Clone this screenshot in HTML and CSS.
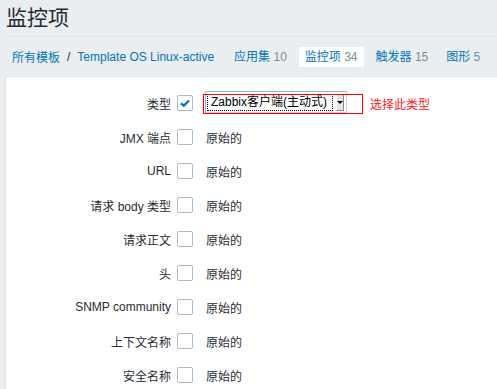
FILE: index.html
```html
<!DOCTYPE html>
<html lang="zh">
<head>
<meta charset="utf-8">
<title>监控项</title>
<link rel="stylesheet" href="styles.css">
</head>
<body>
<header class="page-header">
  <h1 class="title">监控项</h1>
</header>
<nav class="crumbs">
  <a class="link">所有模板</a>
  <span class="sep">/</span>
  <a class="link">Template OS Linux-active</a>
  <ul class="tabs">
    <li class="tab"><a class="link">应用集</a> <span class="count">10</span></li>
    <li class="tab active"><a class="link">监控项</a> <span class="count">34</span></li>
    <li class="tab"><a class="link">触发器</a> <span class="count">15</span></li>
    <li class="tab"><a class="link">图形</a> <span class="count">5</span></li>
    <li class="tab"><a class="link">发现规则</a> <span class="count">3</span></li>
  </ul>
</nav>
<main class="panel">
  <div class="form">
    <div class="label">类型</div>
    <span class="cb checked"><svg viewBox="0 0 16 16" width="16" height="16"><path d="M4 8.3 L6.8 10.7 L12 5.4" fill="none" stroke="#0275b8" stroke-width="2.2"/></svg></span>
    <div class="value">
      <div class="select-wrap">
        <div class="select">
          <span class="select-text">Zabbix客户端(主动式)</span>
          <span class="select-btn"><span class="arrow"></span></span>
        </div>
        <span class="mark"></span>
      </div>
      <span class="note">选择此类型</span>
    </div>

    <div class="label">JMX 端点</div><span class="cb"></span><div class="value"><span class="orig">原始的</span></div>
    <div class="label">URL</div><span class="cb"></span><div class="value"><span class="orig">原始的</span></div>
    <div class="label">请求 body 类型</div><span class="cb"></span><div class="value"><span class="orig">原始的</span></div>
    <div class="label">请求正文</div><span class="cb"></span><div class="value"><span class="orig">原始的</span></div>
    <div class="label">头</div><span class="cb"></span><div class="value"><span class="orig">原始的</span></div>
    <div class="label">SNMP community</div><span class="cb"></span><div class="value"><span class="orig">原始的</span></div>
    <div class="label">上下文名称</div><span class="cb"></span><div class="value"><span class="orig">原始的</span></div>
    <div class="label">安全名称</div><span class="cb"></span><div class="value"><span class="orig">原始的</span></div>
  </div>
</main>
</body>
</html>
```

FILE: styles.css
```css
* { box-sizing: border-box; }
html, body { margin: 0; padding: 0; }
body {
  background: #ebeef1;
  font-family: "Liberation Sans", Arial, "Noto Sans CJK SC", sans-serif;
  font-size: 12px;
  color: #1f2c33;
  width: 497px;
  height: 389px;
  overflow: hidden;
  display: flex;
  flex-direction: column;
}
.page-header {
  margin-left: 5px;
  height: 37px;
  flex: 0 0 37px;
  border-bottom: 1px solid #dfe4e7;
  display: flex;
  align-items: center;
}
.title {
  margin: 0;
  padding-left: 1px;
  font-family: "Liberation Sans", "Noto Sans CJK SC", sans-serif;
  font-size: 21px;
  font-weight: normal;
  line-height: 24px;
  color: #1f2c33;
}
.crumbs {
  margin-left: 5px;
  height: 40px;
  flex: 0 0 40px;
  padding: 0 0 0 7px;
  border-bottom: 1px solid #dfe4e7;
  display: flex;
  align-items: center;
  white-space: nowrap;
  overflow: hidden;
}
.link { color: #0275b8; text-decoration: none; }
.sep { margin: 0 7px 0 7px; color: #1f2c33; }
.tabs {
  list-style: none;
  margin: 0 0 0 14px;
  padding: 0;
  display: flex;
  align-items: center;
}
.tab {
  height: 20px;
  line-height: 20px;
  padding: 0 6px;
  margin-right: 6px;
}
.tab.active { background: #ffffff; }
.count { color: #768d99; }
.panel {
  margin-left: 5px;
  background: #ffffff;
  border-left: 1px solid #dfe4e7;
  flex: 1 1 auto;
  padding-top: 9px;
  overflow: hidden;
}
.form {
  display: grid;
  grid-template-columns: 165px 16px 1fr;
  grid-auto-rows: 34px;
  column-gap: 6px;
  align-items: center;
}
.label {
  text-align: right;
  white-space: nowrap;
  color: #1f2c33;
}
.cb {
  width: 16px;
  height: 16px;
  border: 1px solid #acbbc2;
  border-radius: 2px;
  background: #fff;
  display: block;
  position: relative;
}
.cb svg { position: absolute; left: -1px; top: -1px; }
.value {
  padding-left: 6px;
  display: flex;
  align-items: center;
}
.orig { padding-left: 1px; color: #1f2c33; }
.select-wrap { position: relative; flex: 0 0 auto; }
.select {
  width: 142px;
  height: 22px;
  border: 1px solid #a9b1b7;
  border-right-color: #c9ced2;
  border-bottom-color: #c9ced2;
  background: #fff;
  display: flex;
  align-items: center;
  padding: 0 2px 0 1px;
  position: relative;
  top: -1px;
}
.select-text {
  flex: 0 0 126px;
  height: 17px;
  border: 1px dotted #000;
  font-family: "Liberation Sans", Arial, "Noto Sans CJK SC", sans-serif;
  font-size: 12px;
  line-height: 15px;
  padding-left: 3px;
  color: #000;
  white-space: nowrap;
  overflow: hidden;
}
.select-btn {
  margin-left: 3px;
  width: 10px;
  height: 17px;
  background: #e4e4e4;
  border-left: 1px solid #fff;
  border-top: 1px solid #fff;
  border-right: 1px solid #888;
  border-bottom: 1px solid #888;
  display: flex;
  align-items: center;
  justify-content: center;
}
.arrow {
  width: 0;
  height: 0;
  border-left: 3px solid transparent;
  border-right: 3px solid transparent;
  border-top: 3px solid #000;
}
.mark {
  position: absolute;
  left: -2px;
  top: 2px;
  width: 160px;
  height: 20px;
  border: 1px solid #ff0000;
  pointer-events: none;
}
.note {
  margin-left: 23px;
  color: #ff2222;
  font-size: 12px;
}
```
